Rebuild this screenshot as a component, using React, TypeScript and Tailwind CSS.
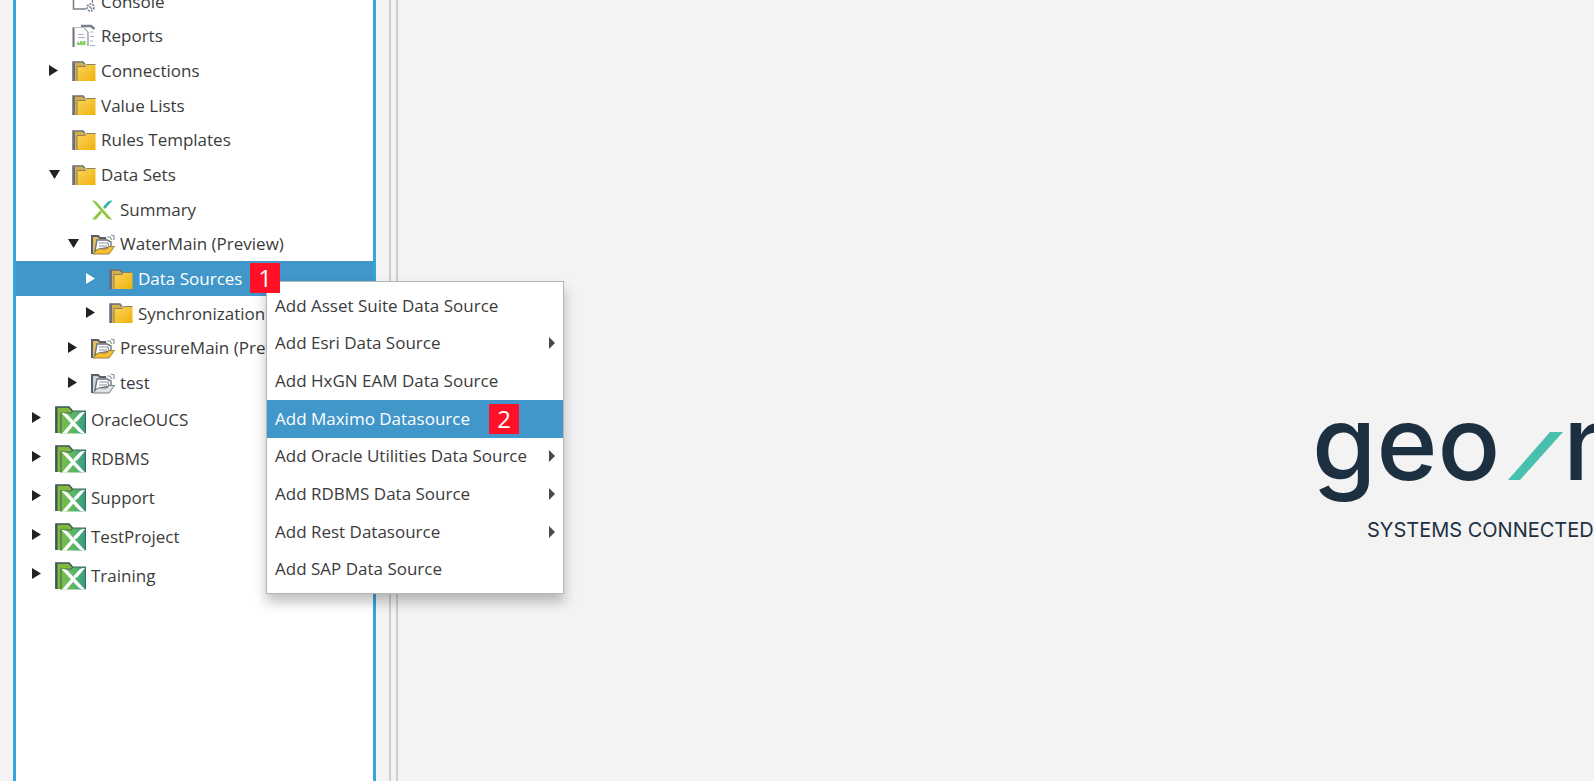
import { useState } from 'react';
import clsx from 'clsx';

type Icon = 'console' | 'reports' | 'folder' | 'summary' | 'open' | 'closed' | 'project';

type Node = {
  label: string;
  icon: Icon;
  level: 1 | 2 | 3;
  arrow?: 'right' | 'down';
  badge?: string;
};

const nodes: Node[] = [
  { label: 'Console', icon: 'console', level: 1 },
  { label: 'Reports', icon: 'reports', level: 1 },
  { label: 'Connections', icon: 'folder', level: 1, arrow: 'right' },
  { label: 'Value Lists', icon: 'folder', level: 1 },
  { label: 'Rules Templates', icon: 'folder', level: 1 },
  { label: 'Data Sets', icon: 'folder', level: 1, arrow: 'down' },
  { label: 'Summary', icon: 'summary', level: 2 },
  { label: 'WaterMain (Preview)', icon: 'open', level: 2, arrow: 'down' },
  { label: 'Data Sources', icon: 'folder', level: 3, arrow: 'right', badge: '1' },
  { label: 'Synchronization', icon: 'folder', level: 3, arrow: 'right' },
  { label: 'PressureMain (Preview)', icon: 'open', level: 2, arrow: 'right' },
  { label: 'test', icon: 'closed', level: 2, arrow: 'right' },
];

const projects = ['OracleOUCS', 'RDBMS', 'Support', 'TestProject', 'Training'];

const menuItems = [
  { label: 'Add Asset Suite Data Source' },
  { label: 'Add Esri Data Source', submenu: true },
  { label: 'Add HxGN EAM Data Source' },
  { label: 'Add Maximo Datasource', badge: '2' },
  { label: 'Add Oracle Utilities Data Source', submenu: true },
  { label: 'Add RDBMS Data Source', submenu: true },
  { label: 'Add Rest Datasource', submenu: true },
  { label: 'Add SAP Data Source' },
];

const indent = { 1: 'pl-[33px]', 2: 'pl-[52px]', 3: 'pl-[70px]' };

function Arrow({ direction }: { direction?: 'right' | 'down' }) {
  return (
    <svg className="h-3 w-[11px] shrink-0" viewBox="0 0 11 12" fill="currentColor">
      {direction === 'right' && <path d="M0 0 L9 5.5 L0 11 Z" />}
      {direction === 'down' && <path d="M0 1 H11 L5.5 10 Z" />}
    </svg>
  );
}

function FolderIcon() {
  return (
    <svg className="h-[21px] w-6" viewBox="0 0 24 21">
      <defs>
        <linearGradient id="folder" x1="0" y1="0" x2="1" y2="1">
          <stop offset="0" stopColor="#fbd45c" />
          <stop offset="1" stopColor="#efb20c" />
        </linearGradient>
      </defs>
      <path d="M1 20 V1 H11 L13 4 H23 V20 Z" fill="#d6ae4c" />
      <path d="M1 20 V1 H11 L13 3.5" fill="none" stroke="#69707a" strokeWidth="1.5" />
      <path d="M2 2 V20" stroke="#69707a" strokeWidth="2" />
      <path d="M5 20 V5.5 H13 L14.5 3.5 H23.5 V20 Z" fill="url(#folder)" />
      <path d="M5 20 V5.5 H13 L14.5 3.5 H23.5" fill="none" stroke="#8d815f" strokeWidth="1" />
    </svg>
  );
}

function OpenFolderIcon({ muted = false }: { muted?: boolean }) {
  return (
    <svg className="h-[21px] w-6" viewBox="0 0 24 21">
      <path d="M1 19 V2 H7 L9 4 H16 V8 L5 19 Z" fill={muted ? '#cfd5da' : '#e5bd5d'} />
      <path d="M1 20 V2 H7 L9 4 H15" fill="none" stroke="#56606b" strokeWidth="2" />
      <path d="M4 17 L6 6 H16 L20 8 V13 L9 15 Z" fill="#fff" stroke="#6d7680" strokeWidth="1.4" />
      <path d="M8 9 H17 L18 13 M8 12 H16" fill="none" stroke="#87919a" strokeWidth="1.2" />
      <path
        d="M2 20 L7 15 H16 L18 12.5 H23.5 L18 20 Z"
        fill={muted ? '#dfe3e6' : '#f5bf2d'}
        stroke={muted ? '#747d86' : '#9a8347'}
        strokeWidth="1"
      />
      <path d="M16 3 H19 L21 6 M20 1 L23 2 V6" fill="none" stroke="#8d969e" strokeWidth="1.2" />
    </svg>
  );
}

function SummaryIcon() {
  return (
    <svg className="ml-px h-5 w-[21px]" viewBox="0 0 21 20">
      <path d="M0 0.5 C2 0.5 3.5 1 5 2.5 L20 19.5 C17.5 19.5 16 19 14.5 17.5 Z" fill="#8dc63f" />
      <path d="M0 19.5 L8 10.5 L10 12.5 L4 19.5 Z" fill="#8dc63f" />
      <path d="M11 7 L15 2.5 C16.5 1 18 0.5 20.5 0.5 L13 9 Z" fill="#37b5a0" />
    </svg>
  );
}

function ConsoleIcon() {
  return (
    <svg className="h-[21px] w-6" viewBox="0 0 24 21">
      <path d="M1.5 0 V18 H14" fill="none" stroke="#77818c" strokeWidth="1.6" />
      <path d="M20.5 0 V12" stroke="#77818c" strokeWidth="1.3" />
      <circle cx="18.5" cy="16.5" r="3.5" fill="#fff" stroke="#77818c" strokeWidth="1.6" strokeDasharray="2 1" />
      <path d="M17 15 L20 18" stroke="#77818c" strokeWidth="1.2" />
    </svg>
  );
}

function ReportsIcon() {
  return (
    <svg className="h-6 w-6" viewBox="0 0 24 24">
      <path d="M9 2 H19 L22.5 5" fill="none" stroke="#77818c" strokeWidth="2.4" />
      <path d="M1.5 23 V3.5 H12 L16 8 V22" fill="#fafafa" stroke="#b9bfc5" strokeWidth="1" />
      <path d="M1.5 23 V3.5" stroke="#68737f" strokeWidth="2" />
      <path d="M12 3.5 L16 8 V22" fill="none" stroke="#8b949d" />
      <path d="M6 10.5 H12 M6 13.5 H13 M18 8 H21 M18 12.5 H22 M18 17 H21 M18 21.5 H23" stroke="#a9b0b7" />
      <path d="M5 21 V18 H7 V19 H8 V17 H10 V18 H11 V17 H13.5 V21 Z" fill="#84d660" />
    </svg>
  );
}

function ProjectIcon() {
  return (
    <svg className="h-7 w-[31px]" viewBox="0 0 31 28">
      <defs>
        <linearGradient id="project" x1="0" y1="0" x2="1" y2="0">
          <stop offset="0" stopColor="#79c043" />
          <stop offset="0.55" stopColor="#5ab567" />
          <stop offset="1" stopColor="#329b88" />
        </linearGradient>
      </defs>
      <path d="M1 27 V1 H14 L18 5 V27 Z" fill="#80b93d" />
      <path d="M1 27 V1 H14 L17.5 5" fill="none" stroke="#3e5658" strokeWidth="1.6" />
      <path d="M1.5 1 V27" stroke="#3e5658" strokeWidth="2" />
      <path d="M6 27.5 V7 H16 L18 5 H30.5 V27.5 Z" fill="url(#project)" />
      <path d="M6 27.5 V7 H16 L18 5 H30.5 V27" fill="none" stroke="#426a5b" strokeWidth="1.2" />
      <path d="M6.5 7 C9.5 7 11.5 7.5 13 9 L30 27.5 C27 27.5 25 27 23 25 Z" fill="#fff" />
      <path d="M7 27.5 L16 17 L18.5 19.5 L11.5 27.5 Z" fill="#fff" />
      <path d="M18.5 14 L24 8 C25.5 6.5 27 6 30 6 L22.5 15 L19.5 16.5 Z" fill="#fff" />
    </svg>
  );
}

function NodeIcon({ icon }: { icon: Icon }) {
  switch (icon) {
    case 'console':
      return <ConsoleIcon />;
    case 'reports':
      return <ReportsIcon />;
    case 'summary':
      return <SummaryIcon />;
    case 'open':
      return <OpenFolderIcon />;
    case 'closed':
      return <OpenFolderIcon muted />;
    case 'project':
      return <ProjectIcon />;
    default:
      return <FolderIcon />;
  }
}

function Badge({ text, className }: { text: string; className: string }) {
  return (
    <span
      className={clsx(
        'absolute z-20 flex size-[30px] items-center justify-center bg-[#ff1027] text-[24px] leading-none text-white',
        className,
      )}
    >
      {text}
    </span>
  );
}

function Tree() {
  const [selected, setSelected] = useState('Data Sources');

  return (
    <nav
      aria-label="Projects"
      className="w-[363px] shrink-0 overflow-hidden border-x-3 border-[#35a6dc] bg-white"
    >
      <ul className="-mt-4 grid h-[416px] auto-rows-fr">
        {nodes.map(({ label, icon, level, arrow, badge }) => (
          <li key={label} className="relative">
            <button
              type="button"
              onClick={() => setSelected(label)}
              className={clsx(
                'flex size-full items-center pt-px whitespace-nowrap',
                indent[level],
                selected === label ? 'bg-[#4196ca] text-white' : 'text-[#3b3b3b]',
              )}
            >
              <span className={clsx('pb-px', selected === label ? 'text-white' : 'text-[#222]')}>
                <Arrow direction={arrow} />
              </span>
              <span className="ml-3 w-6 shrink-0">
                <NodeIcon icon={icon} />
              </span>
              <span className="ml-[5px]">{label}</span>
            </button>
            {badge && <Badge text={badge} className="top-[2px] left-[234px]" />}
          </li>
        ))}
      </ul>
      <ul>
        {projects.map((label) => (
          <li key={label}>
            <button
              type="button"
              onClick={() => setSelected(label)}
              className={clsx(
                'flex h-[39px] w-full items-center pt-px pl-4',
                selected === label ? 'bg-[#4196ca] text-white' : 'text-[#3b3b3b]',
              )}
            >
              <span className="pb-[5px] text-[#222]">
                <Arrow direction="right" />
              </span>
              <span className="ml-3 w-8 shrink-0">
                <NodeIcon icon="project" />
              </span>
              <span className="ml-1">{label}</span>
            </button>
          </li>
        ))}
      </ul>
    </nav>
  );
}

function ContextMenu() {
  const [active, setActive] = useState('Add Maximo Datasource');

  return (
    <ul
      role="menu"
      className="absolute top-[281px] left-[266px] z-10 grid h-[313px] w-[298px] auto-rows-fr border border-[#b5b5b5] bg-white py-[5px] shadow-[0_8px_12px_rgba(0,0,0,0.25)]"
    >
      {menuItems.map(({ label, submenu, badge }) => (
        <li key={label} role="none" className="relative">
          <button
            type="button"
            role="menuitem"
            onMouseEnter={() => setActive(label)}
            className={clsx(
              'flex size-full items-center justify-between px-2 whitespace-nowrap',
              active === label ? 'bg-[#4196ca] text-white' : 'text-[#3b3b3b]',
            )}
          >
            {label}
            {submenu && (
              <svg className="h-3 w-[6px]" viewBox="0 0 6 12" fill="#4a4a4a">
                <path d="M0 0 L6 6 L0 12 Z" />
              </svg>
            )}
          </button>
          {badge && <Badge text={badge} className="top-1 left-[222px]" />}
        </li>
      ))}
    </ul>
  );
}

function Logo() {
  return (
    <div className="w-[282px] overflow-hidden pt-[146px] whitespace-nowrap text-[#1d3042]">
      <div className="flex items-baseline font-['Inter'] text-[104px] leading-[112px] font-medium">
        <span className="w-[196px] shrink-0">geo</span>
        <svg className="h-12 w-[55px] shrink-0" viewBox="0 0 55 48">
          <path d="M0 48 L42 0 H55 L12 48 Z" fill="#49bfae" />
        </svg>
        <span>n</span>
      </div>
      <p className="mt-5 pl-[55px] font-['Inter'] text-[20px] leading-6">SYSTEMS CONNECTED</p>
    </div>
  );
}

export default function App() {
  return (
    <div className="relative flex h-screen overflow-hidden bg-[#f3f3f3] pl-[13px] font-['Open_Sans','Noto_Sans',sans-serif] text-[17px] leading-6">
      <Tree />
      <div className="ml-[13px] w-[9px] shrink-0 border-x-2 border-[#cdcdcd]" />
      <main className="flex min-w-0 flex-1 items-center justify-end">
        <Logo />
      </main>
      <ContextMenu />
    </div>
  );
}
